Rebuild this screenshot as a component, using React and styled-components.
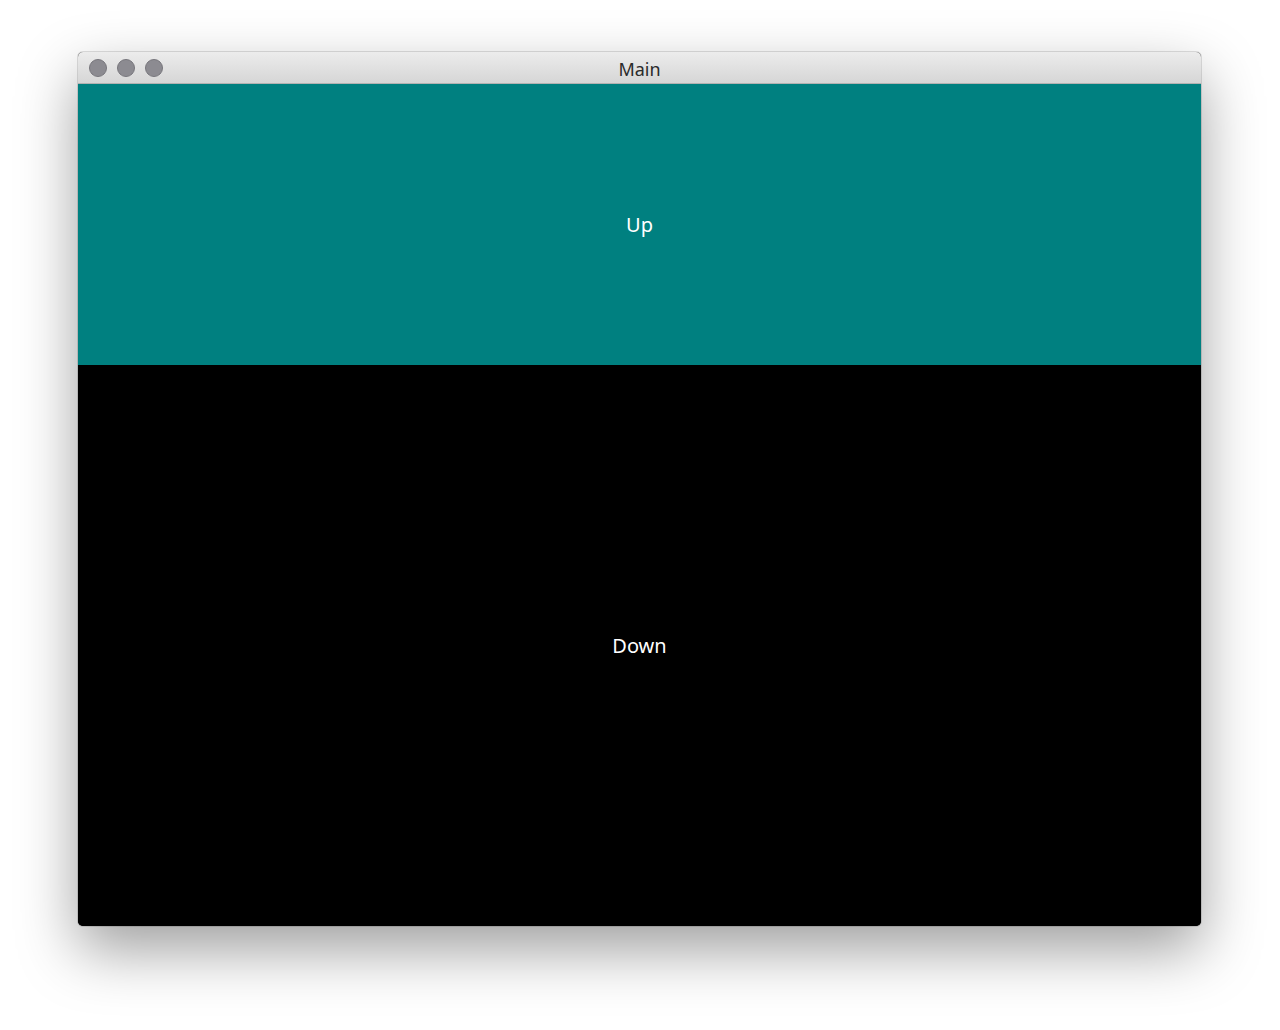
import styled, { createGlobalStyle } from 'styled-components';

const GlobalStyle = createGlobalStyle`
  html, body {
    margin: 0;
    padding: 0;
    background: #ffffff;
    font-family: 'Noto Sans', 'Liberation Sans', sans-serif;
  }
`;

const Page = styled.div`
  display: flex;
  justify-content: flex-start;
  padding: 52px 0 0 78px;
  width: 1280px;
  height: 1030px;
  box-sizing: border-box;
`;

const Window = styled.div`
  display: flex;
  flex-direction: column;
  width: 1123px;
  height: 874px;
  border-radius: 5px;
  overflow: hidden;
  background: #000;
  box-shadow: 0 0 0 1px rgba(0, 0, 0, 0.12), 0 24px 60px rgba(0, 0, 0, 0.38);
`;

const TitleBar = styled.div`
  position: relative;
  display: flex;
  align-items: center;
  justify-content: center;
  height: 31px;
  flex: none;
  background: linear-gradient(#ececec, #d6d6d6);
  border-bottom: 1px solid #b2b2b2;

  .lights {
    position: absolute;
    left: 11px;
    top: 7px;
    display: flex;
    gap: 10px;
  }

  .title {
    font-size: 18px;
    color: #2b2b2b;
    margin-top: 3px;
  }
`;

const Light = styled.span`
  width: 16px;
  height: 16px;
  border-radius: 50%;
  background: #8c8b91;
  border: 1px solid #77767c;
`;

const Pane = styled.div`
  display: flex;
  align-items: center;
  justify-content: center;
  height: ${(p) => p.h}px;
  flex: none;
  background: ${(p) => p.bg};
  color: #ffffff;
  font-size: 20px;
`;

const App = () => {
  return (
    <>
      <GlobalStyle />
      <Page>
        <Window>
          <TitleBar>
            <div className="lights">
              <Light />
              <Light />
              <Light />
            </div>
            <span className="title">Main</span>
          </TitleBar>
          <Pane h={281} bg="#008080">Up</Pane>
          <Pane h={561} bg="#000000">Down</Pane>
        </Window>
      </Page>
    </>
  );
};

export default App;
